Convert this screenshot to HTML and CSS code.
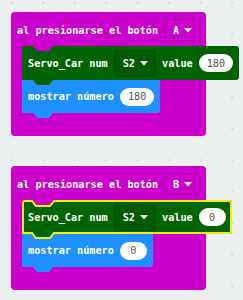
FILE: index.html
```html
<!DOCTYPE html>
<html lang="es">
<head>
    <meta charset="UTF-8">
    <title>Bloques</title>
    <link rel="stylesheet" href="styles.css">
</head>
<body>
    <div class="canvas">
        <!-- evento boton A -->
        <div class="event">
            <div class="event-head">
                <span>al presionarse el botón</span>
                <span class="dropdown">A <svg class="arrow" viewBox="0 0 8 5"><polygon points="0,0 8,0 4,4.5"/></svg></span>
            </div>
            <div class="event-body">
                <div class="stack">
                    <div class="stmt servo">
                        <svg class="notch" viewBox="0 0 20 5"><polygon points="0,0 20,0 16,5 4,5"/></svg>
                        <span>Servo_Car num</span>
                        <span class="dropdown dark">S2 <svg class="arrow" viewBox="0 0 8 5"><polygon points="0,0 8,0 4,4.5"/></svg></span>
                        <span>value</span>
                        <span class="pill">180</span>
                        <svg class="tab" viewBox="0 0 20 5"><polygon points="0,0 20,0 16,5 4,5"/></svg>
                    </div>
                    <div class="stmt basic">
                        <span>mostrar número</span>
                        <span class="pill">180</span>
                        <svg class="tab" viewBox="0 0 20 5"><polygon points="0,0 20,0 16,5 4,5"/></svg>
                    </div>
                </div>
            </div>
            <div class="event-foot"></div>
        </div>

        <!-- evento boton B -->
        <div class="event">
            <div class="event-head">
                <span>al presionarse el botón</span>
                <span class="dropdown">B <svg class="arrow" viewBox="0 0 8 5"><polygon points="0,0 8,0 4,4.5"/></svg></span>
            </div>
            <div class="event-body">
                <div class="stack">
                    <div class="stmt servo selected">
                        <svg class="notch-sel" viewBox="0 0 24 8"><polygon class="fill" points="1,0 23,0 23,1 19,6 5,6 1,1"/><polyline class="line" points="0,1 1,1 5,6 19,6 23,1 24,1"/></svg>
                        <span>Servo_Car num</span>
                        <span class="dropdown dark">S2 <svg class="arrow" viewBox="0 0 8 5"><polygon points="0,0 8,0 4,4.5"/></svg></span>
                        <span>value</span>
                        <span class="pill">0</span>
                        <svg class="tab-sel" viewBox="0 0 24 8"><polygon class="fill" points="1,0 23,0 19,6 5,6"/><polyline class="line" points="0,1 1,1 5,6 19,6 23,1 24,1"/></svg>
                    </div>
                    <div class="stmt basic">
                        <span>mostrar número</span>
                        <span class="pill">0</span>
                        <svg class="tab" viewBox="0 0 20 5"><polygon points="0,0 20,0 16,5 4,5"/></svg>
                    </div>
                </div>
            </div>
            <div class="event-foot"></div>
        </div>
    </div>
</body>
</html>
```

FILE: styles.css
```css
body {
    margin: 0;
    min-height: 100vh;
    background-color: #ecf0f1;
    background-image: radial-gradient(circle, #d3d7da 0.9px, transparent 1.3px);
    background-size: 31.5px 31.5px;
    background-position: -4px -13px;
    font-family: "DejaVu Sans Mono", monospace;
    font-size: 10.2px;
    font-weight: bold;
    color: #fff;
}

.canvas {
    display: flex;
    flex-direction: column;
    align-items: flex-start;
    gap: 30px;
    padding: 12px 0 0 11px;
}

.event {
    width: max-content;
    background-color: #cc00cc;
    border-radius: 4px;
}

.event-head {
    display: flex;
    align-items: center;
    gap: 6px;
    padding: 7px 6px 5px 6px;
    white-space: nowrap;
}

.dropdown {
    display: flex;
    align-items: center;
    gap: 5px;
    height: 20px;
    padding: 0 7px 0 8px;
    border: 1px solid #b000b0;
    border-radius: 3px;
}

.dropdown.dark {
    height: 25px;
    background-color: #005a00;
    border-color: #004d00;
}

.arrow {
    width: 8px;
    height: 5px;
    fill: #fff;
}

.event-body {
    padding-left: 11px;
}

.stack {
    width: 0;
    display: flex;
    flex-direction: column;
    align-items: flex-start;
}

.stmt {
    position: relative;
    width: max-content;
    display: flex;
    align-items: center;
    gap: 6px;
    height: 34px;
    padding: 0 6px;
    box-sizing: border-box;
    white-space: nowrap;
}

.servo {
    background-color: #006400;
    border-radius: 3px 3px 3px 0;
}

.basic {
    height: 33px;
    background-color: #1e90ff;
    border-radius: 0 0 3px 0;
}

.selected {
    box-shadow: inset 0 0 0 2px #f4f000;
}

.pill {
    min-width: 27px;
    height: 18px;
    box-sizing: border-box;
    padding: 0 8px;
    border-radius: 9px;
    background-color: #fff;
    color: #555;
    font-weight: normal;
    display: flex;
    align-items: center;
    justify-content: center;
}

.notch,
.tab {
    position: absolute;
    left: 11px;
    width: 20px;
    height: 5px;
    z-index: 1;
}

.notch {
    top: 0;
    fill: #cc00cc;
}

.tab {
    bottom: -5px;
}

.servo .tab {
    fill: #006400;
}

.basic .tab {
    fill: #1e90ff;
}

.notch-sel,
.tab-sel {
    position: absolute;
    left: 9px;
    width: 24px;
    height: 8px;
    z-index: 1;
}

.notch-sel {
    top: 0;
}

.notch-sel .fill {
    fill: #cc00cc;
}

.tab-sel {
    bottom: -6px;
}

.tab-sel .fill {
    fill: #006400;
}

.notch-sel .line,
.tab-sel .line {
    fill: none;
    stroke: #f4f000;
    stroke-width: 2;
}

.event-foot {
    height: 23px;
}
```
